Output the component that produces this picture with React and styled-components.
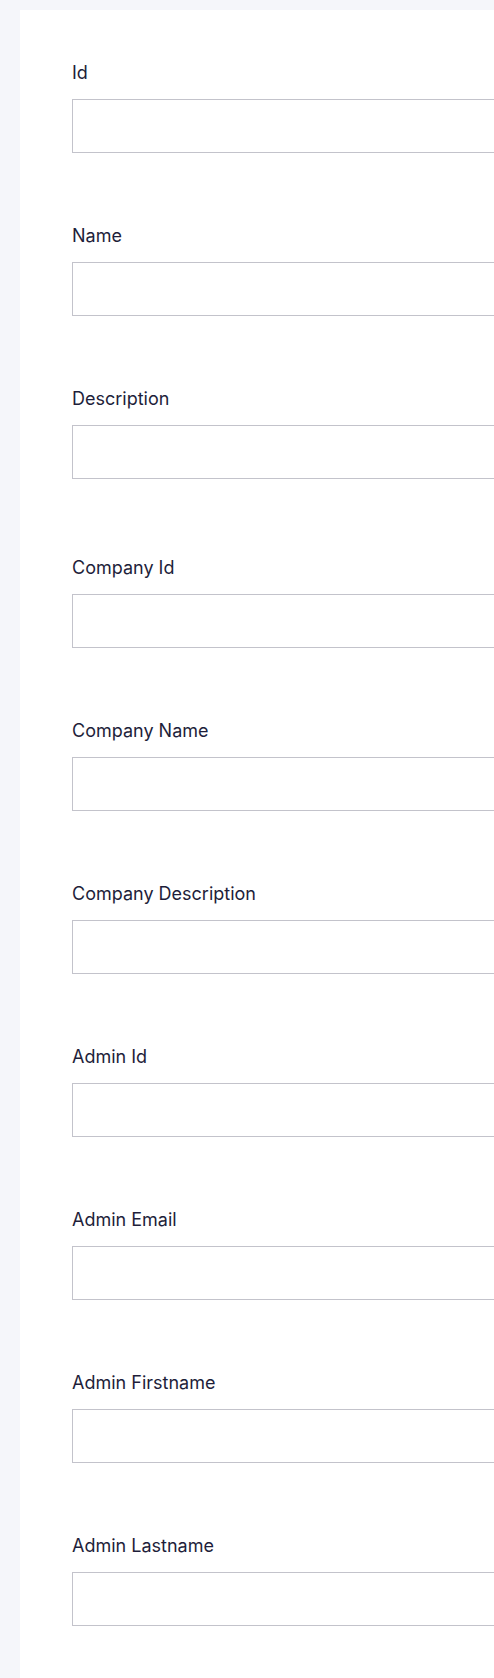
import React from "react";
import styled, { createGlobalStyle } from "styled-components";

const Global = createGlobalStyle`
  html, body {
    margin: 0;
    padding: 0;
    background: #f5f6fa;
    font-family: Inter, Roboto, "Liberation Sans", sans-serif;
  }
  * { box-sizing: border-box; }
`;

const Page = styled.div`
  padding: 10px 0 0 20px;
  min-height: 1678px;
`;

const Card = styled.form`
  background: #ffffff;
  width: 760px;
  padding: 50px 52px 60px;
  display: flex;
  flex-direction: column;
`;

const Field = styled.div`
  display: flex;
  flex-direction: column;
  margin-bottom: ${(p) => (p.$extra ? 76 : 70)}px;
  &:last-child { margin-bottom: 0; }
`;

const Label = styled.label`
  font-size: 18px;
  line-height: 26px;
  font-weight: 400;
  color: #1e1e3a;
  margin-bottom: 13px;
`;

const Input = styled.input`
  height: 54px;
  width: 100%;
  border: 1px solid #c3c3cb;
  border-radius: 0;
  background: #fff;
  padding: 0 14px;
  font: inherit;
  font-size: 16px;
  outline: none;
`;

const fields = [
  "Id",
  "Name",
  "Description",
  "Company Id",
  "Company Name",
  "Company Description",
  "Admin Id",
  "Admin Email",
  "Admin Firstname",
  "Admin Lastname",
];

export default function App() {
  return (
    <>
      <Global />
      <Page>
        <Card onSubmit={(e) => e.preventDefault()}>
          {fields.map((f) => (
            <Field key={f} $extra={f === "Description"}>
              <Label>{f}</Label>
              <Input type="text" aria-label={f} />
            </Field>
          ))}
        </Card>
      </Page>
    </>
  );
}
